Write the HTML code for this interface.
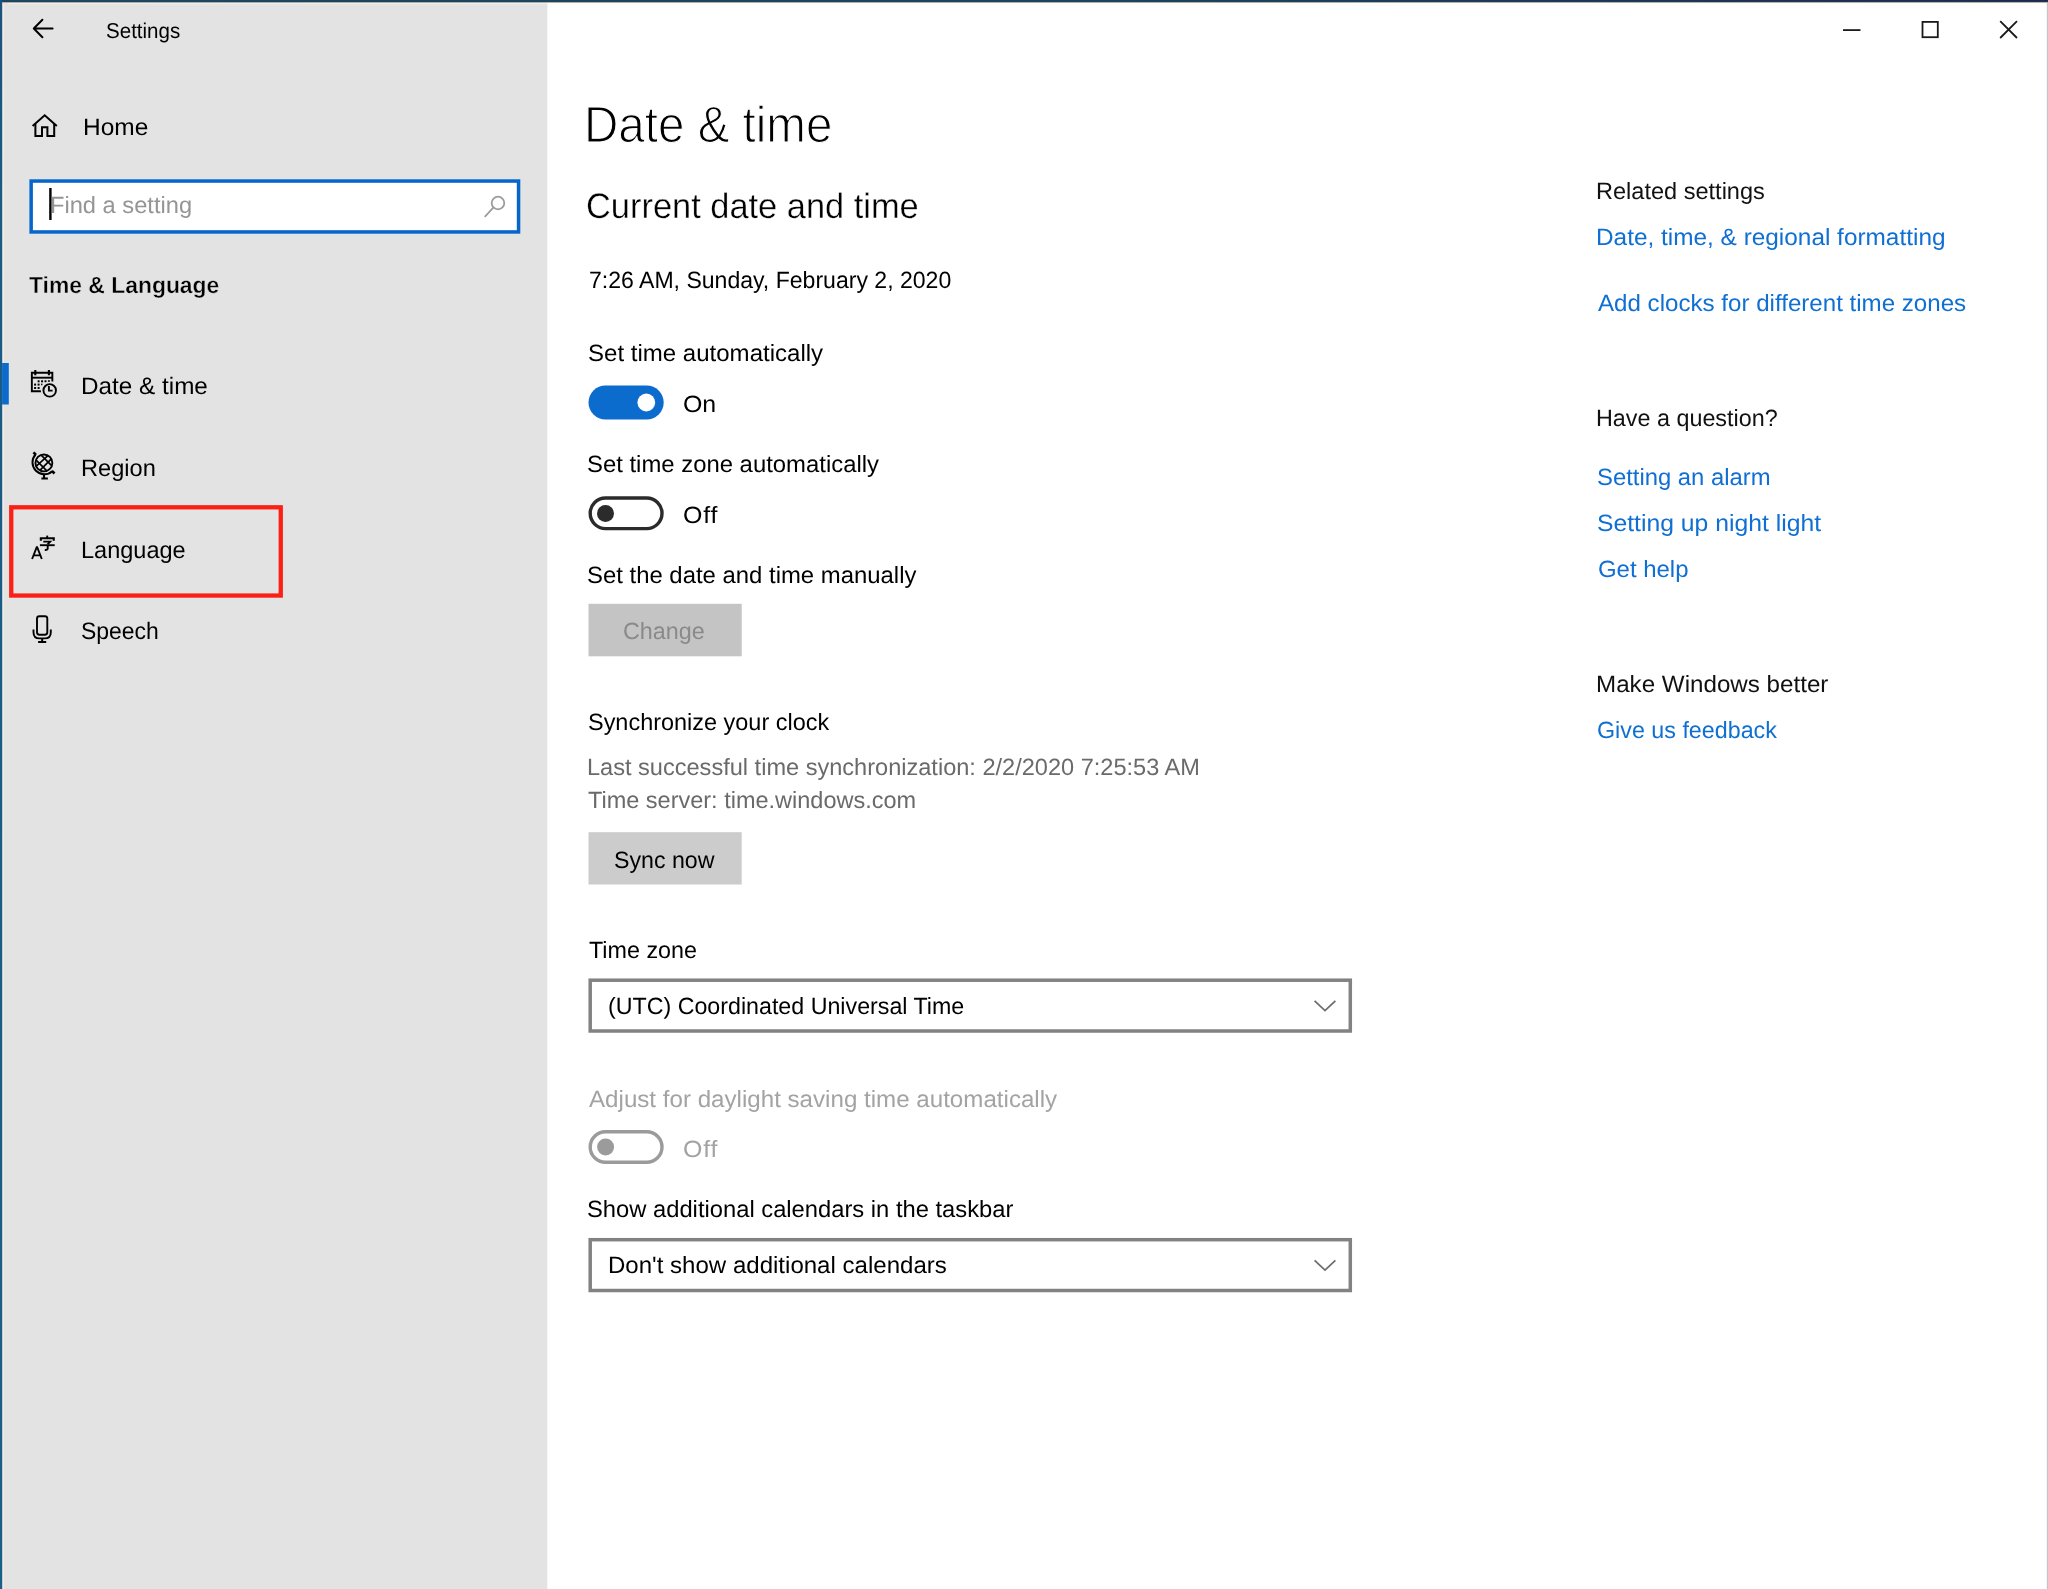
<!DOCTYPE html>
<html lang="en"><head><meta charset="utf-8"><title>Settings</title>
<style>
html,body{margin:0;padding:0;}
body{width:2048px;height:1589px;overflow:hidden;background:#fff;position:relative;font-family:"Liberation Sans",sans-serif;text-rendering:geometricPrecision;}
.t{position:absolute;white-space:pre;margin:0;padding:0;}
.a{position:absolute;}
svg{position:absolute;left:0;top:0;overflow:visible;}
</style></head>
<body>
<svg width="2048" height="1589" viewBox="0 0 2048 1589">
<defs>
<linearGradient id="gt" x1="0" y1="0" x2="1" y2="0"><stop offset="0" stop-color="#0e4e84"/><stop offset="0.15" stop-color="#114a7e"/><stop offset="0.55" stop-color="#0a4a7e"/><stop offset="1" stop-color="#12276a"/></linearGradient>
<linearGradient id="gl" x1="0" y1="0" x2="0" y2="1"><stop offset="0" stop-color="#10548b"/><stop offset="0.12" stop-color="#0a5f93"/><stop offset="1" stop-color="#0b6595"/></linearGradient>
</defs>
<!-- sidebar -->
<rect x="0" y="0" width="547.3" height="1589" fill="#e3e3e3"/>
<!-- window right edge -->
<rect x="2046.8" y="3" width="1.2" height="1586" fill="#c3c5ca"/>
<!-- top border -->
<rect x="0" y="0" width="2048" height="1" fill="url(#gt)"/>
<rect x="0" y="1" width="2048" height="1" fill="url(#gt)"/>
<rect x="2" y="0.7" width="2046" height="1.3" fill="#3a3a28" opacity="0.62"/>
<rect x="2" y="2" width="2046" height="1" fill="#a6a4a0" opacity="0.85"/>
<rect x="3" y="3" width="544.3" height="1" fill="#ebedf4"/>
<rect x="3" y="4" width="544.3" height="1" fill="#dfe8e1"/>
<rect x="3" y="5" width="544.3" height="1" fill="#e7e3de"/>
<rect x="3" y="6" width="544.3" height="1" fill="#e5dfe5"/>
<rect x="3" y="7" width="544.3" height="1" fill="#e0e5e3"/>
<!-- left border -->
<rect x="0" y="0" width="1.1" height="1589" fill="url(#gl)"/>
<rect x="1.1" y="0" width="1" height="1589" fill="url(#gl)"/>
<rect x="1.1" y="2" width="1" height="1587" fill="#3a3a30" opacity="0.4"/>
<rect x="2.1" y="2" width="0.6" height="1587" fill="#a9adb0"/>
<rect x="2.7" y="3" width="1.5" height="1586" fill="#ecedf2"/>
<rect x="4.2" y="3" width="1.4" height="1586" fill="#e6e2e4"/>
<rect x="5.6" y="3" width="1.5" height="1586" fill="#e9e2dd"/>
<rect x="7.1" y="3" width="1.2" height="1586" fill="#dde4e7"/>

<!-- back arrow -->
<g fill="none" stroke="#000" stroke-width="2" stroke-linecap="round" stroke-linejoin="round">
<path d="M52.6 28.5H34.2M42.4 19.8L33.8 28.5L42.4 37.2"/>
</g>

<!-- window controls -->
<g fill="none" stroke="#1a1a1a" stroke-width="1.8">
<path d="M1843 30.1H1860.5"/>
<rect x="1922.5" y="21.9" width="15.3" height="15.3"/>
<path d="M2000.2 21.2L2017 38M2017 21.2L2000.2 38"/>
</g>

<!-- home icon -->
<g fill="none" stroke="#000" stroke-width="2" stroke-linejoin="miter">
<path d="M32.6 126.1L44.7 115.3L56.8 126.1"/>
<path d="M35.4 124V135.9H42V127.3H47.4V135.9H54.2V124"/>
</g>

<!-- search box -->
<rect x="31.15" y="181.05" width="487.4" height="50.9" fill="#fff" stroke="#0565cb" stroke-width="3.5"/>
<rect x="49.2" y="188" width="2.4" height="32" fill="#000"/>
<g fill="none" stroke="#9c9c9c" stroke-width="1.8" stroke-linecap="round">
<circle cx="498" cy="203" r="6.3"/>
<path d="M493.3 207.7L485.2 216.3"/>
</g>

<!-- selected indicator -->
<rect x="2.1" y="363" width="6.7" height="41.5" fill="#0b6acd"/>

<!-- date & time icon -->
<g fill="none" stroke="#000" stroke-width="1.9">
<path d="M42.4 391.3H31.85V372.75H52.35V381.4"/>
<path d="M31.9 377.7H52.3"/>
<path d="M35.3 370V375.2M48.9 370V375.2" stroke-width="2.1"/>
<circle cx="49.7" cy="390.4" r="8.3" stroke="#e3e3e3" stroke-width="1.3" fill="#e3e3e3"/>
<circle cx="49.7" cy="390.4" r="6.25"/>
<path d="M48.9 386V390.6H52.6" stroke-width="1.9"/>
</g>
<g fill="#000">
<rect x="37.6" y="380.3" width="2" height="2"/><rect x="41.1" y="380.3" width="2" height="2"/><rect x="44.5" y="380.3" width="2" height="1.9"/><rect x="47.9" y="380.3" width="2" height="1.5"/>
<rect x="34.1" y="383.6" width="2" height="2"/><rect x="37.6" y="383.6" width="2" height="2"/><rect x="41.1" y="383.6" width="1.3" height="1.6"/>
<rect x="34.1" y="387" width="2" height="2"/><rect x="37.6" y="387" width="2" height="2"/>
</g>

<!-- region (globe) icon -->
<clipPath id="gc"><circle cx="43.9" cy="462.9" r="8.4"/></clipPath>
<g fill="none" stroke="#000" stroke-width="1.9">
<circle cx="43.9" cy="462.9" r="8.45"/>
<path d="M35.5 454.5A11.9 11.9 0 0 0 52.3 471.3" stroke-width="2"/>
<path d="M33.5 452.4L36 454.9M51.9 470.9L54.5 473.5" stroke-width="2.7"/>
<path d="M44 474.6V478M41.4 478.5H47.9" stroke-width="2.1"/>
<g clip-path="url(#gc)" stroke-width="1.7">
<path d="M34.64 448.58L54.64 468.58M29.35 453.37L52.35 476.37"/>
<path d="M54.64 449.5L34.64 467.65M58.16 452.1L36.16 474.1"/>
</g>
</g>

<!-- language icon -->
<g fill="none" stroke="#000" stroke-width="1.9">
<path d="M32.1 559L36.95 546.7L41.8 559M33.9 555.4H40" stroke-linejoin="bevel"/>
<path d="M47.2 535.6V538"/>
<path d="M40.85 540.7V538.3H53.75V540.7" stroke-width="2.1"/>
<path d="M43.3 541.6H50.2L47.6 544.4"/>
<path d="M39.9 545.2H54.7"/>
<path d="M47.7 545V548.6Q47.7 550.2 44.8 549.9"/>
</g>

<!-- annotation red box -->
<rect x="11.25" y="507.3" width="269.5" height="88.25" fill="none" stroke="#fb2016" stroke-width="4.3"/>

<!-- speech (mic) icon -->
<g fill="none" stroke="#000" stroke-width="1.9">
<rect x="37" y="616.2" width="10.3" height="18.5" rx="2.4" ry="2.4"/>
<path d="M33.5 629.4V632.2Q33.5 638.4 39.7 638.4H44.6Q50.8 638.4 50.8 632.2V629.4"/>
<path d="M42.15 638.4V642M38.1 642H46.2" stroke-width="2"/>
</g>

<!-- toggle on -->
<rect x="588.5" y="385.5" width="75.2" height="34" rx="17" fill="#0c6ccd"/>
<circle cx="646.3" cy="402.5" r="8.9" fill="#fff"/>

<!-- toggle off -->
<rect x="590.2" y="498" width="71.8" height="30.6" rx="15.3" fill="#fff" stroke="#2b2b2b" stroke-width="3.4"/>
<circle cx="605.5" cy="513.4" r="8.5" fill="#2b2b2b"/>

<!-- change button (disabled) -->
<rect x="588.5" y="603.8" width="153.2" height="52.5" fill="#c4c4c4"/>
<!-- sync now button -->
<rect x="588.5" y="832.2" width="153.2" height="52.3" fill="#cccccc"/>

<!-- dropdown 1 -->
<rect x="590.2" y="980.2" width="760.1" height="50.8" fill="#fff" stroke="#828282" stroke-width="3.5"/>
<path d="M1314.6 1000.8L1325 1010.6L1335.4 1000.8" fill="none" stroke="#6e6e6e" stroke-width="1.8"/>

<!-- disabled toggle -->
<rect x="590.2" y="1131.7" width="71.8" height="30.6" rx="15.3" fill="#fff" stroke="#9b9b9b" stroke-width="3.4"/>
<circle cx="605.6" cy="1147" r="8.5" fill="#9b9b9b"/>

<!-- dropdown 2 -->
<rect x="590.2" y="1239.7" width="760.1" height="50.8" fill="#fff" stroke="#828282" stroke-width="3.5"/>
<path d="M1314.6 1260.3L1325 1270.1L1335.4 1260.3" fill="none" stroke="#6e6e6e" stroke-width="1.8"/>
</svg>

<div id="txt" style="position:absolute;left:0;top:0;width:2048px;height:1589px;will-change:transform;">
<div class="t" id="settings" style="left:106.31px;top:20.88px;font-size:21.4px;line-height:21.4px;color:#000;transform:scaleX(0.9606);transform-origin:0 0;">Settings</div>
<div class="t" id="home" style="left:82.96px;top:115.85px;font-size:23.8px;line-height:23.8px;color:#000;transform:scaleX(1.0288);transform-origin:0 0;">Home</div>
<div class="t" id="find" style="left:50.00px;top:194.11px;font-size:23.5px;line-height:23.5px;color:#959595;transform:scaleX(1.0069);transform-origin:0 0;">Find a setting</div>
<div class="t" id="tl" style="left:28.76px;top:274.28px;font-size:23.3px;line-height:23.3px;color:#000;font-weight:700;transform:scaleX(0.9822);transform-origin:0 0;-webkit-text-stroke:0.35px #e3e3e3;">Time &amp; Language</div>
<div class="t" id="n1" style="left:80.60px;top:374.60px;font-size:23.8px;line-height:23.8px;color:#000;transform:scaleX(1.0206);transform-origin:0 0;">Date &amp; time</div>
<div class="t" id="n2" style="left:81.00px;top:457.45px;font-size:23.8px;line-height:23.8px;color:#000;transform:scaleX(0.9922);transform-origin:0 0;">Region</div>
<div class="t" id="n3" style="left:80.80px;top:539.35px;font-size:23.8px;line-height:23.8px;color:#000;transform:scaleX(0.9886);transform-origin:0 0;">Language</div>
<div class="t" id="n4" style="left:81.42px;top:620.15px;font-size:23.8px;line-height:23.8px;color:#000;transform:scaleX(0.9638);transform-origin:0 0;">Speech</div>
<div class="t" id="h1" style="left:583.63px;top:99.43px;font-size:51px;line-height:51px;color:#000;transform:scaleX(0.9323);transform-origin:0 0;-webkit-text-stroke:1.2px #fff;">Date &amp; time</div>
<div class="t" id="h2" style="left:586.00px;top:189.32px;font-size:35.3px;line-height:35.3px;color:#000;transform:scaleX(0.9746);transform-origin:0 0;-webkit-text-stroke:0.35px #fff;">Current date and time</div>
<div class="t" id="now" style="left:588.51px;top:269.11px;font-size:23.5px;line-height:23.5px;color:#000;transform:scaleX(0.9810);transform-origin:0 0;">7:26 AM, Sunday, February 2, 2020</div>
<div class="t" id="l1" style="left:588.12px;top:342.36px;font-size:23.5px;line-height:23.5px;color:#000;transform:scaleX(1.0227);transform-origin:0 0;">Set time automatically</div>
<div class="t" id="on" style="left:682.74px;top:392.61px;font-size:23.5px;line-height:23.5px;color:#000;letter-spacing:-0.179px;transform:scaleX(1.0600);transform-origin:0 0;">On</div>
<div class="t" id="l2" style="left:587.16px;top:452.61px;font-size:23.5px;line-height:23.5px;color:#000;transform:scaleX(1.0160);transform-origin:0 0;">Set time zone automatically</div>
<div class="t" id="off" style="left:682.75px;top:504.11px;font-size:23.5px;line-height:23.5px;color:#000;letter-spacing:0.819px;transform:scaleX(1.0600);transform-origin:0 0;">Off</div>
<div class="t" id="l3" style="left:587.16px;top:564.36px;font-size:23.5px;line-height:23.5px;color:#000;transform:scaleX(1.0167);transform-origin:0 0;">Set the date and time manually</div>
<div class="t" id="change" style="left:623.22px;top:620.36px;font-size:23.5px;line-height:23.5px;color:#8a8a8a;transform:scaleX(0.9943);transform-origin:0 0;">Change</div>
<div class="t" id="l4" style="left:587.85px;top:710.81px;font-size:23.5px;line-height:23.5px;color:#000;transform:scaleX(0.9980);transform-origin:0 0;">Synchronize your clock</div>
<div class="t" id="s1" style="left:586.60px;top:756.41px;font-size:23.5px;line-height:23.5px;color:#6a6a6a;transform:scaleX(1.0025);transform-origin:0 0;">Last successful time synchronization: 2/2/2020 7:25:53 AM</div>
<div class="t" id="s2" style="left:588.32px;top:789.21px;font-size:23.5px;line-height:23.5px;color:#6a6a6a;transform:scaleX(0.9996);transform-origin:0 0;">Time server: time.windows.com</div>
<div class="t" id="sync" style="left:614.33px;top:848.61px;font-size:23.5px;line-height:23.5px;color:#000;transform:scaleX(0.9859);transform-origin:0 0;">Sync now</div>
<div class="t" id="l5" style="left:588.85px;top:939.11px;font-size:23.5px;line-height:23.5px;color:#000;transform:scaleX(0.9918);transform-origin:0 0;">Time zone</div>
<div class="t" id="tz" style="left:608.12px;top:995.36px;font-size:23.5px;line-height:23.5px;color:#000;transform:scaleX(0.9884);transform-origin:0 0;">(UTC) Coordinated Universal Time</div>
<div class="t" id="l6" style="left:588.66px;top:1088.11px;font-size:23.5px;line-height:23.5px;color:#a3a3a3;transform:scaleX(1.0270);transform-origin:0 0;">Adjust for daylight saving time automatically</div>
<div class="t" id="off2" style="left:682.75px;top:1137.86px;font-size:23.5px;line-height:23.5px;color:#a3a3a3;letter-spacing:0.819px;transform:scaleX(1.0600);transform-origin:0 0;">Off</div>
<div class="t" id="l7" style="left:587.22px;top:1198.11px;font-size:23.5px;line-height:23.5px;color:#000;transform:scaleX(1.0105);transform-origin:0 0;">Show additional calendars in the taskbar</div>
<div class="t" id="cal" style="left:607.50px;top:1254.11px;font-size:23.5px;line-height:23.5px;color:#000;transform:scaleX(1.0233);transform-origin:0 0;">Don't show additional calendars</div>
<div class="t" id="r1" style="left:1596.20px;top:180.41px;font-size:23.5px;line-height:23.5px;color:#111;transform:scaleX(1.0018);transform-origin:0 0;">Related settings</div>
<div class="t" id="r2" style="left:1596.20px;top:226.11px;font-size:23.5px;line-height:23.5px;color:#0f6fd2;transform:scaleX(1.0371);transform-origin:0 0;">Date, time, &amp; regional formatting</div>
<div class="t" id="r3" style="left:1597.63px;top:292.41px;font-size:23.5px;line-height:23.5px;color:#0f6fd2;transform:scaleX(1.0262);transform-origin:0 0;">Add clocks for different time zones</div>
<div class="t" id="r4" style="left:1596.20px;top:407.21px;font-size:23.5px;line-height:23.5px;color:#111;transform:scaleX(0.9930);transform-origin:0 0;">Have a question?</div>
<div class="t" id="r5" style="left:1597.16px;top:466.41px;font-size:23.5px;line-height:23.5px;color:#0f6fd2;transform:scaleX(1.0145);transform-origin:0 0;">Setting an alarm</div>
<div class="t" id="r6" style="left:1596.98px;top:512.11px;font-size:23.5px;line-height:23.5px;color:#0f6fd2;transform:scaleX(1.0520);transform-origin:0 0;">Setting up night light</div>
<div class="t" id="r7" style="left:1597.58px;top:557.81px;font-size:23.5px;line-height:23.5px;color:#0f6fd2;transform:scaleX(1.0187);transform-origin:0 0;">Get help</div>
<div class="t" id="r8" style="left:1596.20px;top:673.41px;font-size:23.5px;line-height:23.5px;color:#111;transform:scaleX(1.0285);transform-origin:0 0;">Make Windows better</div>
<div class="t" id="r9" style="left:1596.72px;top:719.11px;font-size:23.5px;line-height:23.5px;color:#0f6fd2;transform:scaleX(0.9906);transform-origin:0 0;">Give us feedback</div>
</div>
</body></html>
